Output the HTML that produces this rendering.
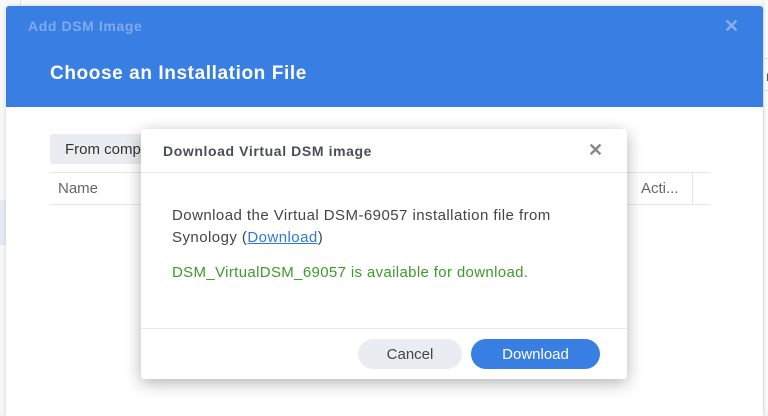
<!DOCTYPE html>
<html><head><style>
*{margin:0;padding:0;box-sizing:border-box}
body{width:768px;height:410px;overflow:hidden;background:#f4f5f7;font-family:"Liberation Sans",sans-serif;position:relative}
.abs{position:absolute;white-space:nowrap}
</style></head><body>
<div class="abs" style="left:0;top:0;width:768px;height:410px;background:#f7f8fa"></div>
<div class="abs" style="left:20px;top:0;width:1px;height:6px;background:#dde"></div>
<div class="abs" style="left:0;top:200px;width:6px;height:45px;background:#e3eaf3"></div>
<div class="abs" style="left:763px;top:0;width:5px;height:410px;background:#fafbfc;border-left:1px solid #e5e8ec"></div>
<div class="abs" style="left:764px;top:58px;width:4px;height:1px;background:#dde"></div>
<div class="abs" style="left:764px;top:90px;width:4px;height:1px;background:#dde"></div>
<div class="abs" style="left:766px;top:68px;font-size:14px;color:#555">n</div>
<div class="abs" style="left:6px;top:6px;width:757px;height:410px;background:#fff;border-radius:3px 3px 0 0;box-shadow:0 0 4px rgba(0,0,0,.15)"></div>
<div class="abs" style="left:6px;top:6px;width:757px;height:101px;background:#397ee2;border-radius:3px 3px 0 0"></div>
<div class="abs" style="left:28px;top:18px;font-size:14px;letter-spacing:0.6px;font-weight:bold;color:#7faaee">Add DSM Image</div>
<div class="abs" style="left:724px;top:16px;font-size:18px;font-weight:bold;color:#86aff0">✕</div>
<div class="abs" style="left:50px;top:63px;font-size:19px;letter-spacing:0.6px;font-weight:bold;color:#fff">Choose an Installation File</div>
<div class="abs" style="left:50px;top:134px;width:120px;height:30px;background:#e9edf2;border-radius:3px"></div>
<div class="abs" style="left:65px;top:141px;font-size:15px;color:#333">From comp</div>
<div class="abs" style="left:50px;top:172px;width:660px;height:1px;background:#e3e7ec"></div>
<div class="abs" style="left:50px;top:204px;width:660px;height:1px;background:#e3e7ec"></div>
<div class="abs" style="left:692px;top:173px;width:1px;height:31px;background:#e3e7ec"></div>
<div class="abs" style="left:58px;top:180px;font-size:15px;color:#666">Name</div>
<div class="abs" style="left:641px;top:180px;font-size:15px;color:#666">Acti...</div>
<div class="abs" style="left:141px;top:129px;width:486px;height:250px;background:#fff;border-radius:3px;box-shadow:0 4px 16px rgba(0,0,0,.3)"></div>
<div class="abs" style="left:163px;top:143px;font-size:14px;letter-spacing:0.6px;font-weight:bold;color:#4a4f55">Download Virtual DSM image</div>
<div class="abs" style="left:588px;top:140px;font-size:18px;font-weight:bold;color:#888">✕</div>
<div class="abs" style="left:141px;top:172px;width:486px;height:1px;background:#e6eaef"></div>
<div class="abs" style="left:172px;top:205px;font-size:15px;letter-spacing:0.45px;line-height:22px;color:#444">Download the Virtual DSM-69057 installation file from<br>Synology (<span style="color:#2f78d8;text-decoration:underline">Download</span>)</div>
<div class="abs" style="left:172px;top:264px;font-size:15px;letter-spacing:0.35px;color:#3d9a2a">DSM_VirtualDSM_69057 is available for download.</div>
<div class="abs" style="left:141px;top:328px;width:486px;height:1px;background:#e6eaef"></div>
<div class="abs" style="left:358px;top:339px;width:104px;height:30px;background:#e9edf2;border-radius:15px;text-align:center;line-height:31px;font-size:15px;color:#444">Cancel</div>
<div class="abs" style="left:471px;top:339px;width:129px;height:30px;background:#397ee2;border-radius:15px;text-align:center;line-height:31px;font-size:15px;color:#fff">Download</div>
</body></html>
